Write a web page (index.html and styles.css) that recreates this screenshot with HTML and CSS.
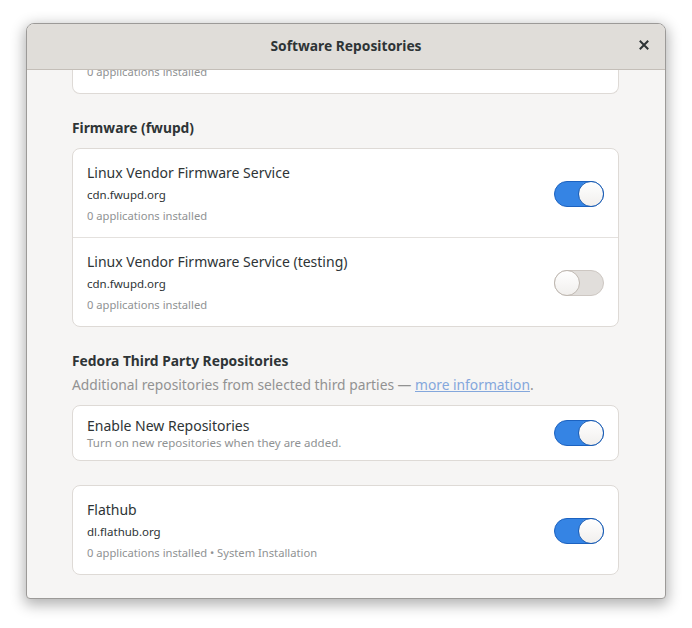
FILE: index.html
```html
<!DOCTYPE html>
<html>
<head>
<meta charset="utf-8">
<link rel="stylesheet" href="styles.css">
</head>
<body>
<div class="window">
  <header class="headerbar">
    <div class="title">Software Repositories</div>
    <button class="close" aria-label="Close">
      <svg width="10" height="10" viewBox="0 0 10 10"><path d="M1.5 1.5 L8.5 8.5 M8.5 1.5 L1.5 8.5" stroke="#2e3436" stroke-width="2" stroke-linecap="square"/></svg>
    </button>
  </header>
  <main class="content">
    <div class="column">
      <div class="card partial">
        <div class="line-apps">0 applications installed</div>
      </div>

      <h2 class="section-title first">Firmware (fwupd)</h2>
      <div class="card">
        <div class="row">
          <div class="info">
            <div class="name">Linux Vendor Firmware Service</div>
            <div class="url">cdn.fwupd.org</div>
            <div class="line-apps">0 applications installed</div>
          </div>
          <div class="switch on"><span class="knob"></span></div>
        </div>
        <div class="row">
          <div class="info">
            <div class="name">Linux Vendor Firmware Service (testing)</div>
            <div class="url">cdn.fwupd.org</div>
            <div class="line-apps">0 applications installed</div>
          </div>
          <div class="switch off"><span class="knob"></span></div>
        </div>
      </div>

      <h2 class="section-title">Fedora Third Party Repositories</h2>
      <p class="section-desc">Additional repositories from selected third parties — <a href="#" class="link">more information</a>.</p>
      <div class="card">
        <div class="row compact">
          <div class="info">
            <div class="name">Enable New Repositories</div>
            <div class="subtitle">Turn on new repositories when they are added.</div>
          </div>
          <div class="switch on"><span class="knob"></span></div>
        </div>
      </div>

      <div class="card spaced">
        <div class="row">
          <div class="info">
            <div class="name">Flathub</div>
            <div class="url">dl.flathub.org</div>
            <div class="line-apps">0 applications installed • System Installation</div>
          </div>
          <div class="switch on"><span class="knob"></span></div>
        </div>
      </div>
    </div>
  </main>
</div>
</body>
</html>
```

FILE: styles.css
```css
* { box-sizing: border-box; }

html, body {
  margin: 0;
  padding: 0;
  background: #ffffff;
}

body {
  padding: 23px 26px;
  font-family: "Noto Sans", "Open Sans", sans-serif;
  color: #2e3436;
}

.window {
  width: 640px;
  border: 1px solid #9c9a98;
  border-radius: 8px 8px 4px 4px;
  background: #f6f5f4;
  overflow: hidden;
  box-shadow: 0 4px 14px 2px rgba(0, 0, 0, 0.30);
}

.headerbar {
  height: 46px;
  background: #e0ddd9;
  border-bottom: 1px solid #c4beb8;
  display: flex;
  align-items: center;
  justify-content: center;
  position: relative;
}

.title {
  font-size: 13.8px;
  font-weight: 700;
  color: #2e3436;
  margin-top: -2px;
}

.close {
  position: absolute;
  right: 15px;
  top: 15px;
  width: 12px;
  height: 12px;
  border: 0;
  padding: 0;
  background: transparent;
  display: flex;
  align-items: center;
  justify-content: center;
}

.content {
  overflow: hidden;
  padding: 0 0 23px;
}

.column {
  width: 547px;
  margin-left: 45px;
}

.card {
  background: #ffffff;
  border: 1px solid #dedad6;
  border-radius: 8px;
}

.card.partial {
  margin-top: -7px;
  border-top: 0;
  border-radius: 0 0 8px 8px;
  padding: 0 14px 12px;
}

.card.spaced {
  margin-top: 24px;
}

.row {
  display: flex;
  align-items: center;
  justify-content: space-between;
  padding: 14px 14px 12px 14px;
  min-height: 88px;
}

.row + .row {
  border-top: 1px solid #e4e1de;
  min-height: 87px;
}

.row.compact {
  padding: 10px 14px 10px 14px;
  min-height: 0;
}

.info {
  display: flex;
  flex-direction: column;
}

.name {
  font-size: 14px;
  line-height: 20px;
  color: #2e3436;
}

.url {
  font-size: 11.5px;
  line-height: 24px;
  color: #2e3436;
}

.line-apps {
  font-size: 11.2px;
  line-height: 18px;
  color: #8f9293;
}

.subtitle {
  font-size: 11.5px;
  line-height: 14px;
  color: #8f9293;
}

.section-title {
  margin: 24px 0 0;
  font-size: 13.8px;
  line-height: 20px;
  font-weight: 700;
  color: #2e3436;
}

.section-title.first + .card {
  margin-top: 10px;
}

.section-desc {
  margin: 3px 0 9px;
  font-size: 13.8px;
  line-height: 22px;
  color: #929292;
}

.link {
  color: #84a7dc;
  text-decoration: underline;
}

.switch {
  width: 50px;
  height: 26px;
  border-radius: 13px;
  border: 1px solid;
  display: flex;
  flex-shrink: 0;
}

.switch.on {
  background: #3584e4;
  border-color: #1c62c0;
  justify-content: flex-end;
}

.switch.off {
  background: #e1dedb;
  border-color: #cdc7c2;
  justify-content: flex-start;
}

.knob {
  width: 26px;
  height: 26px;
  margin: -1px;
  border-radius: 50%;
  background: linear-gradient(#ffffff, #f1efed);
  border: 1px solid #bfb8b1;
}

.switch.on .knob {
  border-color: #1c5db3;
}
```
